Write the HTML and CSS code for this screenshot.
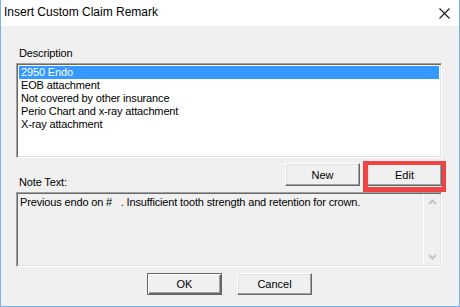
FILE: index.html
```html
<!DOCTYPE html>
<html>
<head>
<meta charset="utf-8">
<link rel="stylesheet" href="styles.css">
</head>
<body>
<div class="window">
  <div class="titlebar">
    <span class="title">Insert Custom Claim Remark</span>
    <svg class="close" width="11" height="11" viewBox="0 0 11 11"><path d="M0.5 0.5 L10.5 10.5 M10.5 0.5 L0.5 10.5" stroke="#1a1a1a" stroke-width="1.1" fill="none"/></svg>
  </div>
  <div class="content">
    <div class="label desc">Description</div>
    <div class="listbox">
      <div class="item selected">2950 Endo</div>
      <div class="item">EOB attachment</div>
      <div class="item">Not covered by other insurance</div>
      <div class="item">Perio Chart and x-ray attachment</div>
      <div class="item">X-ray attachment</div>
    </div>
    <div class="midrow">
      <div class="label note-label">Note Text:</div>
      <div class="actions">
        <button class="btn">New</button>
        <span class="marked"><button class="btn">Edit</button></span>
      </div>
    </div>
    <div class="note">
      <div class="note-text">Previous endo on #&nbsp;&nbsp;&nbsp;. Insufficient tooth strength and retention for crown.</div>
      <div class="vscroll">
        <svg width="9" height="6" viewBox="0 0 9 6"><path d="M1 5 L4.5 1.5 L8 5" stroke="#c4c4c4" stroke-width="2" fill="none"/></svg>
        <svg width="9" height="6" viewBox="0 0 9 6"><path d="M1 1 L4.5 4.5 L8 1" stroke="#c4c4c4" stroke-width="2" fill="none"/></svg>
      </div>
    </div>
    <div class="footer">
      <button class="btn default">OK</button>
      <button class="btn">Cancel</button>
    </div>
  </div>
</div>
</body>
</html>
```
FILE: styles.css
```css
html, body {
  margin: 0;
  padding: 0;
  background: #f0f0f0;
}
.window {
  width: 460px;
  height: 307px;
  box-sizing: border-box;
  border: 1px solid #76b4f0;
  border-top: none;
  background: #f0f0f0;
  font-family: "Liberation Sans", Arial, sans-serif;
  font-size: 11px;
  letter-spacing: -0.15px;
  color: #000;
}
.titlebar {
  height: 26px;
  background: #fff;
  display: flex;
  align-items: center;
  justify-content: space-between;
  padding: 0 9px 2px 3px;
  box-sizing: border-box;
  letter-spacing: 0;
}
.title {
  font-size: 12px;
  color: #000;
}
.close {
  display: block;
  margin-top: 3px;
}
.content {
  padding: 0 17px 0 15px;
}
.label {
  line-height: 13px;
  height: 13px;
  padding-left: 3px;
}
.desc {
  margin-top: 21px;
}
.listbox {
  margin-top: 3px;
  height: 95px;
  box-sizing: border-box;
  background: #fff;
  border: 1px solid;
  border-color: #a0a0a0 #fff #fff #a0a0a0;
  box-shadow: inset 1px 1px #696969, inset -1px -1px #e3e3e3;
  padding: 2px 2px 0 2px;
}
.item {
  height: 13px;
  line-height: 13px;
  padding-left: 2px;
  white-space: nowrap;
}
.item.selected {
  background: #3399ff;
  color: #fff;
}
.midrow {
  margin-top: 5px;
  height: 29px;
  display: flex;
  justify-content: space-between;
}
.note-label {
  align-self: flex-end;
  margin-bottom: 3px;
}
.actions {
  display: flex;
  gap: 7px;
  align-items: flex-start;
}
.btn {
  width: 75px;
  height: 23px;
  margin: 0;
  padding: 0;
  font-family: "Liberation Sans", Arial, sans-serif;
  font-size: 11px;
  color: #000;
  background: #f0f0f0;
  border: 1px solid;
  border-color: #fff #696969 #696969 #fff;
  box-shadow: inset -1px -1px #a0a0a0, inset 1px 1px #e3e3e3;
  box-sizing: border-box;
}
.marked {
  position: relative;
  display: block;
}
.marked::after {
  content: "";
  position: absolute;
  left: -4px;
  top: -2px;
  right: -4px;
  bottom: -6px;
  border: 4px solid #f04444;
  border-left-width: 5px;
  border-bottom-width: 5px;
  pointer-events: none;
}
.note {
  height: 75px;
  box-sizing: border-box;
  border: 1px solid;
  border-color: #a0a0a0 #fff #fff #a0a0a0;
  box-shadow: inset 1px 1px #696969, inset -1px -1px #e3e3e3;
  display: flex;
  padding: 1px 1px 1px 1px;
}
.note-text {
  flex: 1;
  padding: 2px 0 0 2px;
  line-height: 13px;
  white-space: nowrap;
}
.vscroll {
  width: 16px;
  border-left: 1px solid #fff;
  display: flex;
  flex-direction: column;
  justify-content: space-between;
  align-items: center;
  padding: 5px 0 5px 0;
}
.vscroll svg {
  display: block;
}
.footer {
  margin-top: 6px;
  display: flex;
  justify-content: center;
  gap: 15px;
  padding-left: 1px;
}
.footer .btn {
  height: 22px;
}
.btn.default {
  border: 1px solid #646464;
  box-shadow: inset 1px 1px #fff, inset -1px -1px #696969, inset -2px -2px #a0a0a0;
}
```
